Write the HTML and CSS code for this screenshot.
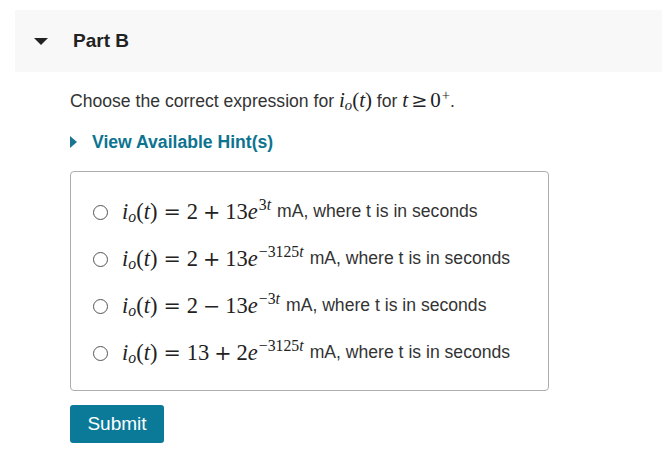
FILE: index.html
```html
<!DOCTYPE html>
<html>
<head>
<meta charset="utf-8">
<link rel="stylesheet" href="styles.css">
</head>
<body>
<div class="page">
  <div class="part-header">
    <span class="caret-down"></span>
    <span class="part-title">Part B</span>
  </div>
  <div class="content">
    <p class="question">Choose the correct expression for <span class="m q"><i>i</i><sub><i>o</i></sub>(<i>t</i>)</span> for <span class="m q"><i>t</i><span class="rel">≥</span>0<sup>+</sup></span>.</p>
    <div class="hint"><span class="caret-right"></span><span class="hint-text">View Available Hint(s)</span></div>
    <div class="options">
      <div class="option"><span class="radio"></span><span class="m expr"><i>i</i><sub><i>o</i></sub>(<i>t</i>)<span class="rel">=</span>2<span class="bin">+</span>13<i>e</i><sup>3<i>t</i></sup></span><span class="unit">mA, where t is in seconds</span></div>
      <div class="option"><span class="radio"></span><span class="m expr"><i>i</i><sub><i>o</i></sub>(<i>t</i>)<span class="rel">=</span>2<span class="bin">+</span>13<i>e</i><sup>−3125<i>t</i></sup></span><span class="unit">mA, where t is in seconds</span></div>
      <div class="option"><span class="radio"></span><span class="m expr"><i>i</i><sub><i>o</i></sub>(<i>t</i>)<span class="rel">=</span>2<span class="bin">−</span>13<i>e</i><sup>−3<i>t</i></sup></span><span class="unit">mA, where t is in seconds</span></div>
      <div class="option"><span class="radio"></span><span class="m expr"><i>i</i><sub><i>o</i></sub>(<i>t</i>)<span class="rel">=</span>13<span class="bin">+</span>2<i>e</i><sup>−3125<i>t</i></sup></span><span class="unit">mA, where t is in seconds</span></div>
    </div>
    <button class="submit">Submit</button>
  </div>
</div>
</body>
</html>
```
FILE: styles.css
```css
html, body { margin: 0; padding: 0; background: #fff; }
body { font-family: "Liberation Sans", Arial, sans-serif; color: #333; }
.page { padding: 10px 0 0 15px; }
.part-header {
  background: #f8f8f8;
  height: 62px;
  display: flex;
  align-items: center;
}
.caret-down {
  width: 0; height: 0;
  border-left: 7px solid transparent;
  border-right: 7px solid transparent;
  border-top: 7px solid #222;
  margin-left: 19px;
  margin-top: 1px;
}
.part-title {
  font-weight: bold;
  font-size: 19px;
  color: #222;
  margin-left: 25px;
}
.content { padding-left: 55px; }
.question { margin: 16px 0 0; font-size: 17.6px; line-height: 24px; color: #333; white-space: nowrap; }
.m { font-family: "Liberation Serif", "DejaVu Serif", serif; font-size: 22.5px; color: #222; white-space: nowrap; }
.m.q { font-size: 21px; }
.m i { font-style: italic; }
.m sub { font-size: 0.7em; vertical-align: -0.2em; line-height: 0; }
.m sup { font-size: 0.7em; vertical-align: 0.55em; line-height: 0; margin-left: 1px; }
.m.q sup { vertical-align: 0.45em; }
.m .rel, .m .bin { font-family: "DejaVu Serif", serif; font-size: 0.92em; }
.m .rel { margin: 0 6px; }
.m .bin { margin: 0 5px; }
.m.q .rel { margin: 0 3px; }
.hint { display: flex; align-items: center; margin-top: 19px; height: 20px; }
.caret-right {
  width: 0; height: 0;
  border-top: 6px solid transparent;
  border-bottom: 6px solid transparent;
  border-left: 7px solid #1a7690;
}
.hint-text { color: #0d7490; font-weight: bold; font-size: 17.6px; margin-left: 15px; }
.options {
  margin-top: 19px;
  width: 479px;
  border: 1px solid #adadad;
  border-radius: 4px;
  padding: 16px 0 0 22px;
  box-sizing: border-box;
  height: 220px;
}
.option { display: flex; align-items: center; height: 47px; }
.radio {
  width: 15px; height: 15px;
  border: 1.5px solid #555;
  border-radius: 50%;
  box-sizing: border-box;
  margin-top: 1px;
  flex: none;
}
.expr { margin-left: 14px; }
.unit { font-size: 17.6px; margin-left: 6px; color: #333; }
.submit {
  display: block;
  margin-top: 14px;
  background: #0b7a99;
  color: #fff;
  border: none;
  border-radius: 3px;
  font-family: "Liberation Sans", Arial, sans-serif;
  font-size: 19px;
  width: 94px;
  height: 38px;
  padding: 0;
}
```
